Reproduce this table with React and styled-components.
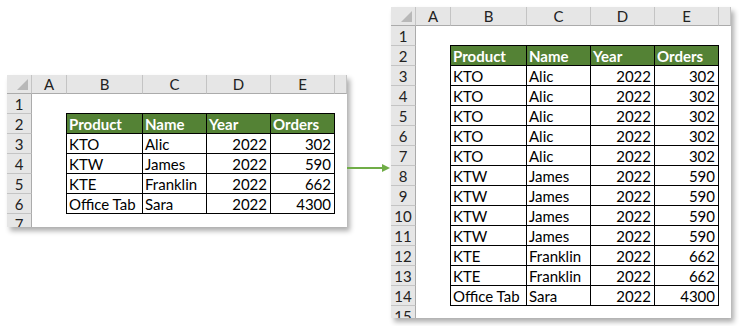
import React from 'react';
import styled, { createGlobalStyle } from 'styled-components';

const GlobalStyle = createGlobalStyle`
  html, body {
    margin: 0;
    background: #ffffff;
  }
  body {
    font-family: Lato, "Liberation Sans", sans-serif;
  }
`;

const COLS = '25px 35px 76px 64px 64px 64px 12px';
const LETTERS = ['A', 'B', 'C', 'D', 'E', ''];

const Page = styled.div`
  display: flex;
  align-items: flex-start;
  padding: 7px 0 0 7px;
  width: 739px;
  height: 326px;
  box-sizing: border-box;
`;

const Sheet = styled.div`
  display: grid;
  grid-template-columns: ${COLS};
  grid-auto-rows: 20px;
  grid-template-rows: 19px;
  width: 340px;
  height: ${({ $height }) => $height}px;
  margin-top: ${({ $top }) => $top}px;
  overflow: hidden;
  background: #ffffff;
  box-shadow: 3px 4px 5px rgba(0, 0, 0, 0.32);
  font-size: 15px;
  color: #000;
`;

const Corner = styled.div`
  position: relative;
  background: #e6e6e6;
  border-right: 1px solid #c4c4c4;
  border-bottom: 1px solid #ababab;
  box-sizing: border-box;

  &::after {
    content: '';
    position: absolute;
    right: 3px;
    bottom: 3px;
    border-style: solid;
    border-width: 0 0 11px 11px;
    border-color: transparent transparent #b8b8b8 transparent;
  }
`;

const ColHead = styled.div`
  display: flex;
  align-items: center;
  justify-content: center;
  background: #e6e6e6;
  border-right: 1px solid #c4c4c4;
  border-bottom: 1px solid #ababab;
  box-sizing: border-box;
  color: #222;
  font-size: 15px;
`;

const RowHead = styled.div`
  display: flex;
  align-items: center;
  justify-content: center;
  background: #e6e6e6;
  border-right: 1px solid #ababab;
  border-bottom: 1px solid #c4c4c4;
  box-sizing: border-box;
  color: #222;
  padding-top: 1px;
`;

const Cell = styled.div`
  display: flex;
  align-items: center;
  justify-content: ${({ $right }) => ($right ? 'flex-end' : 'flex-start')};
  padding: 1px 3px 0 2px;
  box-sizing: border-box;
  white-space: nowrap;
  background: ${({ $head }) => ($head ? '#548235' : 'transparent')};
  color: ${({ $head }) => ($head ? '#ffffff' : '#000')};
  font-weight: ${({ $head }) => ($head ? 700 : 400)};
  border-right: ${({ $boxed }) => ($boxed ? '1px solid #000' : 'none')};
  border-bottom: ${({ $boxed }) => ($boxed ? '1px solid #000' : 'none')};
  border-left: ${({ $first }) => ($first ? '1px solid #000' : 'none')};
  border-top: ${({ $head }) => ($head ? '1px solid #000' : 'none')};
  margin-left: ${({ $first }) => ($first ? '-1px' : '0')};
  margin-top: ${({ $head }) => ($head ? '-1px' : '0')};
`;

const Blank = styled.div``;

const ArrowWrap = styled.div`
  width: 44px;
  height: 14px;
  margin-top: 152px;
  flex: none;
`;

const HEADERS = ['Product', 'Name', 'Year', 'Orders'];

const SMALL = [
  ['KTO', 'Alic', '2022', '302'],
  ['KTW', 'James', '2022', '590'],
  ['KTE', 'Franklin', '2022', '662'],
  ['Office Tab', 'Sara', '2022', '4300'],
];

const BIG = [
  ...Array(5).fill(['KTO', 'Alic', '2022', '302']),
  ...Array(4).fill(['KTW', 'James', '2022', '590']),
  ...Array(2).fill(['KTE', 'Franklin', '2022', '662']),
  ['Office Tab', 'Sara', '2022', '4300'],
];

function SheetView({ rows, height, top }) {
  const total = rows.length + 3;
  const cells = [<Corner key="corner" />];
  LETTERS.forEach((l, i) => cells.push(<ColHead key={'h' + i}>{l}</ColHead>));

  for (let r = 1; r <= total; r++) {
    cells.push(<RowHead key={'r' + r}>{r}</RowHead>);
    cells.push(<Blank key={'a' + r} />);
    const isHead = r === 2;
    const data = isHead ? HEADERS : rows[r - 3];
    for (let c = 0; c < 4; c++) {
      if (data) {
        cells.push(
          <Cell
            key={'c' + r + '-' + c}
            $head={isHead}
            $boxed
            $first={c === 0}
            $right={!isHead && c >= 2}
          >
            {data[c]}
          </Cell>
        );
      } else {
        cells.push(<Blank key={'c' + r + '-' + c} />);
      }
    }
    cells.push(<Blank key={'z' + r} />);
  }

  return (
    <Sheet $height={height} $top={top}>
      {cells}
    </Sheet>
  );
}

function Arrow() {
  return (
    <ArrowWrap>
      <svg width="44" height="14" viewBox="0 0 44 14">
        <line x1="0" y1="7" x2="37" y2="7" stroke="#70ad47" strokeWidth="2" />
        <polygon points="35,3 43,7 35,11" fill="#70ad47" />
      </svg>
    </ArrowWrap>
  );
}

export default function App() {
  return (
    <>
      <GlobalStyle />
      <Page>
        <SheetView rows={SMALL} height={152} top={68} />
        <Arrow />
        <SheetView rows={BIG} height={311} top={0} />
      </Page>
    </>
  );
}
